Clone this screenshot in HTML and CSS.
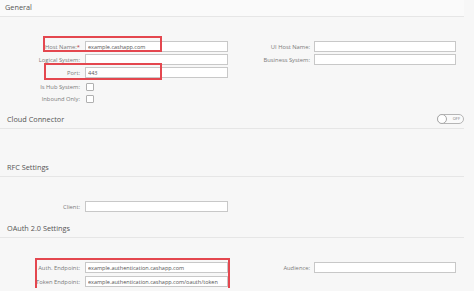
FILE: index.html
```html
<!DOCTYPE html>
<html lang="en">
<head>
    <meta charset="UTF-8">
    <title>Communication System</title>
    <link rel="stylesheet" href="styles.css">
</head>
<body>
    <!-- General -->
    <div class="section-head">General</div>
    <div class="section">
        <div class="form-grid">
            <label class="field-label">Host Name:<span class="required">*</span></label>
            <div class="field"><input type="text" value="example.cashapp.com"></div>
            <label class="field-label">UI Host Name:</label>
            <div class="field"><input type="text"></div>

            <label class="field-label">Logical System:</label>
            <div class="field"><input type="text"></div>
            <label class="field-label">Business System:</label>
            <div class="field"><input type="text"></div>

            <label class="field-label">Port:</label>
            <div class="field"><input type="text" value="443"></div>
            <div></div><div></div>

            <label class="field-label check-row">Is Hub System:</label>
            <div class="field check-row"><span class="checkbox"></span></div>
            <div></div><div></div>

            <label class="field-label">Inbound Only:</label>
            <div class="field"><span class="checkbox"></span></div>
            <div></div><div></div>
        </div>
        <div class="highlight host-box"></div>
        <div class="highlight port-box"></div>
    </div>

    <!-- Cloud Connector -->
    <div class="section-head">
        <span>Cloud Connector</span>
        <span class="switch"><span class="knob"></span><span class="switch-text">OFF</span></span>
    </div>
    <div class="section empty"></div>

    <!-- RFC Settings -->
    <div class="section-head">RFC Settings</div>
    <div class="section rfc">
        <div class="form-grid">
            <label class="field-label">Client:</label>
            <div class="field"><input type="text"></div>
            <div></div><div></div>
        </div>
    </div>

    <!-- OAuth 2.0 Settings -->
    <div class="section-head">OAuth 2.0 Settings</div>
    <div class="section oauth">
        <div class="form-grid">
            <label class="field-label">Auth. Endpoint:</label>
            <div class="field"><input type="text" value="example.authentication.cashapp.com"></div>
            <label class="field-label">Audience:</label>
            <div class="field"><input type="text"></div>

            <label class="field-label">Token Endpoint:</label>
            <div class="field"><input type="text" value="example.authentication.cashapp.com/oauth/token"></div>
            <div></div><div></div>
        </div>
        <div class="highlight oauth-box"></div>
    </div>
</body>
</html>
```

FILE: styles.css
```css
body {
    margin: 0;
    background-color: #f7f7f7;
    font-family: "Open Sans", Arial, sans-serif;
    color: #333;
    overflow: hidden;
}
.section-head {
    display: flex;
    align-items: center;
    justify-content: space-between;
    height: 14px;
    line-height: 14px;
    padding: 7px 0 2px 7px;
    margin-right: 10px;
    border-bottom: 1px solid #e6e6e6;
    font-size: 7.3px;
    color: #555;
}
.section-head:first-child {
    padding-top: 0;
    padding-left: 5px;
    background: #fafafa;
}
.section {
    position: relative;
    padding-top: 23px;
}
.section.empty {
    padding-top: 24px;
}
.section.rfc {
    padding-bottom: 1px;
}
.form-grid {
    display: grid;
    grid-template-columns: 85px 143px 86px 142px;
    grid-auto-rows: 13px;
}
.oauth .form-grid {
    row-gap: 1px;
}
.field-label {
    display: flex;
    align-items: center;
    justify-content: flex-end;
    padding-right: 5px;
    font-size: 5.8px;
    color: #7a7a7a;
    white-space: nowrap;
}
.field-label:nth-child(4n+3) {
    padding-right: 4px;
}
.required {
    color: #b33;
}
.field {
    display: flex;
    align-items: center;
}
.check-row {
    margin-top: 2px;
}
input[type="text"] {
    width: 100%;
    height: 11px;
    box-sizing: border-box;
    border: 1px solid #c8c8c8;
    background: #fff;
    padding: 0 2px;
    font-family: "Open Sans", Arial, sans-serif;
    font-size: 5.5px;
    color: #555;
    outline: none;
}
.checkbox {
    display: inline-block;
    width: 6px;
    height: 6px;
    margin-left: 1px;
    border: 1px solid #b0b0b0;
    border-radius: 1px;
    background: #fff;
}
/* annotation boxes drawn over the form */
.highlight {
    position: absolute;
    box-sizing: border-box;
    border: 2px solid #e4474f;
}
.host-box {
    left: 43px;
    top: 19px;
    width: 119px;
    height: 16px;
}
.port-box {
    left: 44px;
    top: 46px;
    width: 118px;
    height: 17px;
}
.oauth-box {
    left: 35px;
    top: 20px;
    width: 195px;
    height: 40px;
}
.switch {
    position: relative;
    display: inline-flex;
    align-items: center;
    justify-content: flex-end;
    width: 27px;
    height: 10px;
    box-sizing: border-box;
    border: 1px solid #b5b5b5;
    border-radius: 5px;
    background: #fafafa;
    padding-right: 3px;
}
.knob {
    position: absolute;
    left: -1px;
    top: -1px;
    width: 10px;
    height: 10px;
    box-sizing: border-box;
    border: 1px solid #a8a8a8;
    border-radius: 50%;
    background: #fff;
}
.switch-text {
    font-size: 4px;
    line-height: 8px;
    color: #777;
}
```
